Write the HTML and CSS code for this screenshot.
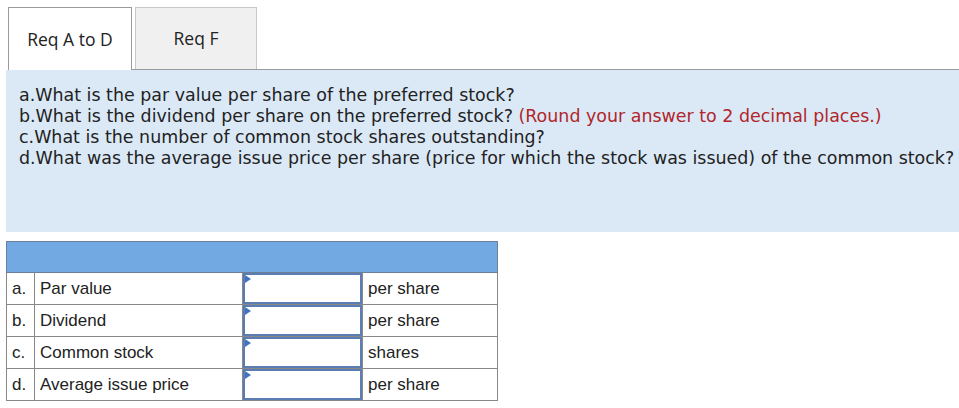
FILE: index.html
```html
<!DOCTYPE html>
<html>
<head>
<meta charset="utf-8">
<link rel="stylesheet" href="styles.css">
</head>
<body>
<div class="tabs">
  <div class="tab active">Req A to D</div>
  <div class="tab">Req F</div>
</div>
<div class="panel">
  <p>a.What is the par value per share of the preferred stock?</p>
  <p>b.What is the dividend per share on the preferred stock? <span class="hint">(Round your answer to 2 decimal places.)</span></p>
  <p>c.What is the number of common stock shares outstanding?</p>
  <p>d.What was the average issue price per share (price for which the stock was issued) of the common stock?</p>
</div>
<table class="answers">
  <tr class="head"><td colspan="4"></td></tr>
  <tr><td class="ltr">a.</td><td class="lbl">Par value</td><td class="inp"><div class="box"></div></td><td class="unit">per share</td></tr>
  <tr><td class="ltr">b.</td><td class="lbl">Dividend</td><td class="inp"><div class="box"></div></td><td class="unit">per share</td></tr>
  <tr><td class="ltr">c.</td><td class="lbl">Common stock</td><td class="inp"><div class="box"></div></td><td class="unit">shares</td></tr>
  <tr><td class="ltr">d.</td><td class="lbl">Average issue price</td><td class="inp"><div class="box"></div></td><td class="unit">per share</td></tr>
</table>
</body>
</html>
```
FILE: styles.css
```css
html, body { margin: 0; padding: 0; background: #fff; }
body { padding: 7px 0 0 6px; }
.tabs {
  display: flex;
  gap: 3px;
  margin-left: 2px;
  border-bottom: 1px solid #9a9a9a;
  height: 62px;
}
.tab {
  width: 122px;
  height: 62px;
  box-sizing: border-box;
  display: flex;
  align-items: center;
  justify-content: center;
  font-family: "Open Sans", "Noto Sans", sans-serif;
  font-size: 17.5px;
  color: #222;
  border: 1px solid #c8c8c8;
  border-bottom: none;
  background: #f0f0f0;
  padding-bottom: 1px;
}
.tab.active {
  background: #fff;
  border-color: #9a9a9a;
  height: 63px;
  margin-bottom: -1px;
  width: 124px;
}
.panel {
  background: #dbe9f7;
  height: 162px;
  box-sizing: border-box;
  padding: 15px 0 0 13px;
  font-family: "DejaVu Sans", Verdana, sans-serif;
  font-size: 17.45px;
  color: #222;
  white-space: nowrap;
  overflow: hidden;
}
.panel p { margin: 0; line-height: 21px; }
.hint { color: #b0262a; }
.answers {
  margin-top: 9px;
  border-collapse: collapse;
  font-family: "Liberation Sans", Arial, sans-serif;
  font-size: 17px;
  color: #222;
}
.answers td {
  border: 1px solid #888;
  height: 32px;
  padding: 0;
  box-sizing: border-box;
}
.answers .head td {
  background: #72a9e2;
  border-color: #6c7f96;
  height: 31px;
}
.ltr { width: 28px; padding-left: 5px !important; }
.lbl { width: 208px; padding-left: 5px !important; }
.inp { width: 120px; }
.unit { width: 135px; padding-left: 5px !important; }
.box {
  position: relative;
  height: 31px;
  box-sizing: border-box;
  border: 2px solid #5b7db3;
  background: #fff;
}
.box::before {
  content: "";
  position: absolute;
  left: 0;
  top: 0;
  border-left: 6px solid #3f74c0;
  border-top: 4px solid transparent;
  border-bottom: 4px solid transparent;
}
```
